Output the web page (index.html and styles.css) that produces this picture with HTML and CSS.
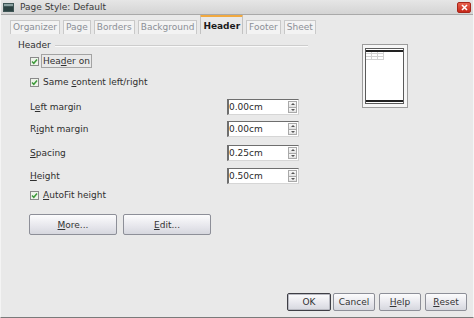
FILE: index.html
```html
<!DOCTYPE html>
<html>
<head>
<meta charset="utf-8">
<link rel="stylesheet" href="styles.css">
</head>
<body>
<div class="window">
  <div class="titlebar">
    <svg class="app-icon" width="11" height="9" viewBox="0 0 11 9"><rect x="0" y="0" width="11" height="9" fill="#3f5656"/><rect x="1" y="1" width="9" height="2" fill="#8aa0a0"/><rect x="1" y="4" width="9" height="4" fill="#2c4242"/></svg>
    <span class="title">Page Style: Default</span>
    <span class="close"><svg width="7" height="7" viewBox="0 0 7 7"><path d="M1 1L6 6M6 1L1 6" stroke="#fff" stroke-width="1.6"/></svg></span>
  </div>
  <div class="tabs">
    <span class="tab">Organizer</span>
    <span class="tab">Page</span>
    <span class="tab">Borders</span>
    <span class="tab">Background</span>
    <span class="tab active">Header</span>
    <span class="tab">Footer</span>
    <span class="tab">Sheet</span>
  </div>
  <div class="panel">
    <div class="form">
      <div class="section"><span>Header</span><span class="rule"></span></div>
      <div class="check first">
        <svg class="box" width="9" height="9" viewBox="0 0 9 9"><rect x="0.5" y="0.5" width="8" height="8" fill="#eef4ea" stroke="#8a8a8a"/><path d="M2 4.5L3.8 6.3L7 2.6" fill="none" stroke="#3d9a3a" stroke-width="1.5"/></svg>
        <span class="focus">Hea<u>d</u>er on</span>
      </div>
      <div class="check second">
        <svg class="box" width="9" height="9" viewBox="0 0 9 9"><rect x="0.5" y="0.5" width="8" height="8" fill="#eef4ea" stroke="#8a8a8a"/><path d="M2 4.5L3.8 6.3L7 2.6" fill="none" stroke="#3d9a3a" stroke-width="1.5"/></svg>
        <span class="ctext">Same <u>c</u>ontent left/right</span>
      </div>
      <div class="field r1">
        <span class="flabel">L<u>e</u>ft margin</span>
        <span class="spin"><span class="val">0.00cm</span><span class="arrows"><span class="up"></span><span class="down"></span></span></span>
      </div>
      <div class="field r2">
        <span class="flabel">R<u>i</u>ght margin</span>
        <span class="spin"><span class="val">0.00cm</span><span class="arrows"><span class="up"></span><span class="down"></span></span></span>
      </div>
      <div class="field r3">
        <span class="flabel"><u>S</u>pacing</span>
        <span class="spin"><span class="val">0.25cm</span><span class="arrows"><span class="up"></span><span class="down"></span></span></span>
      </div>
      <div class="field r4">
        <span class="flabel"><u>H</u>eight</span>
        <span class="spin"><span class="val">0.50cm</span><span class="arrows"><span class="up"></span><span class="down"></span></span></span>
      </div>
      <div class="check third">
        <svg class="box" width="9" height="9" viewBox="0 0 9 9"><rect x="0.5" y="0.5" width="8" height="8" fill="#eef4ea" stroke="#8a8a8a"/><path d="M2 4.5L3.8 6.3L7 2.6" fill="none" stroke="#3d9a3a" stroke-width="1.5"/></svg>
        <span class="ctext"><u>A</u>utoFit height</span>
      </div>
      <div class="actions">
        <span class="btn wide"><u>M</u>ore...</span>
        <span class="btn wide"><u>E</u>dit...</span>
      </div>
    </div>
    <svg class="preview" width="46" height="64" viewBox="0 0 46 64">
      <rect x="0.5" y="0.5" width="45" height="63" fill="#f6f6f6" stroke="#9c9c9c"/>
      <rect x="3.5" y="4.5" width="38" height="55" fill="#ffffff" stroke="#5a5a5a"/>
      <g stroke="#d2d2d2" stroke-width="1">
        <path d="M4 9.5H22M4 12.5H22M4 15.5H22M9.5 7V16M15.5 7V16M21.5 7V16"/>
      </g>
      <rect x="4" y="6" width="37" height="2" fill="#222"/>
      <rect x="4" y="56" width="37" height="2" fill="#222"/>
    </svg>
  </div>
  <div class="footer">
    <span class="btn ok">OK</span>
    <span class="btn">Cancel</span>
    <span class="btn"><u>H</u>elp</span>
    <span class="btn"><u>R</u>eset</span>
  </div>
</div>
</body>
</html>
```
FILE: styles.css
```css
* { box-sizing: border-box; margin: 0; padding: 0; }
html, body { width: 474px; height: 318px; overflow: hidden; }
body {
  font-family: "DejaVu Sans", "Liberation Sans", sans-serif;
  font-size: 9px;
  color: #2f2f2f;
  background: #e9e9e9;
}
u { text-decoration: underline; text-underline-offset: 1px; }

.window {
  display: flex;
  flex-direction: column;
  width: 474px;
  height: 318px;
  border-left: 1px solid #f4f4f4;
  border-right: 1px solid #f6f6f6;
  border-bottom: 1px solid #7a7a7a;
}

.titlebar {
  height: 15px;
  flex: none;
  display: flex;
  align-items: center;
  padding: 0 2px 0 2px;
  background: linear-gradient(#e6e6e6, #d4d4d4);
  border-bottom: 1px solid #a9a9a9;
}
.app-icon { flex: none; }
.title { margin-left: 6px; color: #3a3a3a; line-height: 12px; }
.close {
  margin-left: auto;
  width: 14px;
  height: 11px;
  display: flex;
  align-items: center;
  justify-content: center;
  background: linear-gradient(#e8614d, #c6281a);
  border: 1px solid #a8261a;
  border-radius: 2px;
}

.tabs {
  height: 19px;
  flex: none;
  display: flex;
  align-items: flex-end;
  gap: 3px;
  padding-left: 9px;
}
.tab {
  height: 14px;
  padding: 0 2px;
  line-height: 12px;
  border: 1px solid #c9c9c9;
  border-bottom: none;
  background: #f3f3f3;
  color: #8b8f96;
  border-radius: 1px 1px 0 0;
}
.tab.active {
  height: 19px;
  padding: 3px 2px 0;
  line-height: 12px;
  background: #e9e9e9;
  color: #1c1c1c;
  font-weight: bold;
  border: none;
  border-top: 2px solid #f1a940;
  border-left: 1px solid #c2c2c2;
  border-right: 1px solid #c2c2c2;
}

.panel {
  flex: 1;
  display: flex;
  align-items: flex-start;
  padding: 6px 0 0 17px;
}
.form { width: 290px; display: flex; flex-direction: column; }

.section { display: flex; align-items: center; height: 11px; line-height: 11px; }
.rule {
  flex: 1;
  margin-left: 4px;
  height: 2px;
  border-top: 1px solid #cdcdcd;
  border-bottom: 1px solid #fafafa;
}

.check {
  display: flex;
  align-items: center;
  height: 14px;
  margin-left: 12px;
}
.check.first { margin-top: 3px; }
.check.second { margin-top: 7px; }
.check.third { margin-top: 4px; }
.box { flex: none; }
.focus {
  margin-left: 2px;
  padding: 0 1px;
  line-height: 12px;
  border: 1px solid #a3a3a3;
}
.ctext { margin-left: 4px; }

.field {
  display: flex;
  align-items: center;
  height: 16px;
  margin-left: 12px;
}
.field.r1 { margin-top: 10px; }
.field.r2 { margin-top: 6px; }
.field.r3 { margin-top: 8px; }
.field.r4 { margin-top: 7px; }
.flabel { width: 197px; flex: none; }
.spin {
  width: 72px;
  height: 16px;
  display: flex;
  align-items: center;
  background: #fff;
  border: 1px solid;
  border-color: #6e6e6e #cfcfcf #d6d6d6 #6e6e6e;
  border-left-width: 2px;
}
.val { line-height: 13px; color: #2a2a2a; }
.arrows {
  margin-left: auto;
  margin-right: 1px;
  width: 9px;
  height: 12px;
  display: flex;
  flex-direction: column;
}
.up, .down {
  flex: 1;
  border: 1px solid #a9a9a9;
  background: linear-gradient(#fafafa, #e2e2e2);
  position: relative;
}
.down { border-top: none; }
.up::after, .down::after {
  content: "";
  position: absolute;
  left: 1.5px;
  width: 0;
  height: 0;
  border-left: 2px solid transparent;
  border-right: 2px solid transparent;
}
.up::after { top: 1px; border-bottom: 2px solid #555; }
.down::after { top: 1px; border-top: 2px solid #555; }

.actions {
  display: flex;
  gap: 6px;
  margin-top: 12px;
  margin-left: 11px;
}
.btn {
  height: 18px;
  width: 42px;
  display: flex;
  align-items: center;
  justify-content: center;
  border: 1px solid #8d8f98;
  border-radius: 2px;
  background: linear-gradient(#fcfcfd, #e6e6ec 60%, #d6d7de);
  color: #333;
}
.btn.wide { width: 88px; height: 21px; }
.btn.ok {
  width: 44px;
  border: 1px solid #3f3f46;
  box-shadow: inset 0 0 0 1px #b9bac2;
}

.preview { margin-left: 54px; margin-top: 4px; flex: none; }

.footer {
  height: 24px;
  flex: none;
  display: flex;
  justify-content: flex-end;
  align-items: flex-start;
  gap: 4px;
  padding: 0 6px 6px 0;
}
.footer .ok { margin-right: -2px; }
```
